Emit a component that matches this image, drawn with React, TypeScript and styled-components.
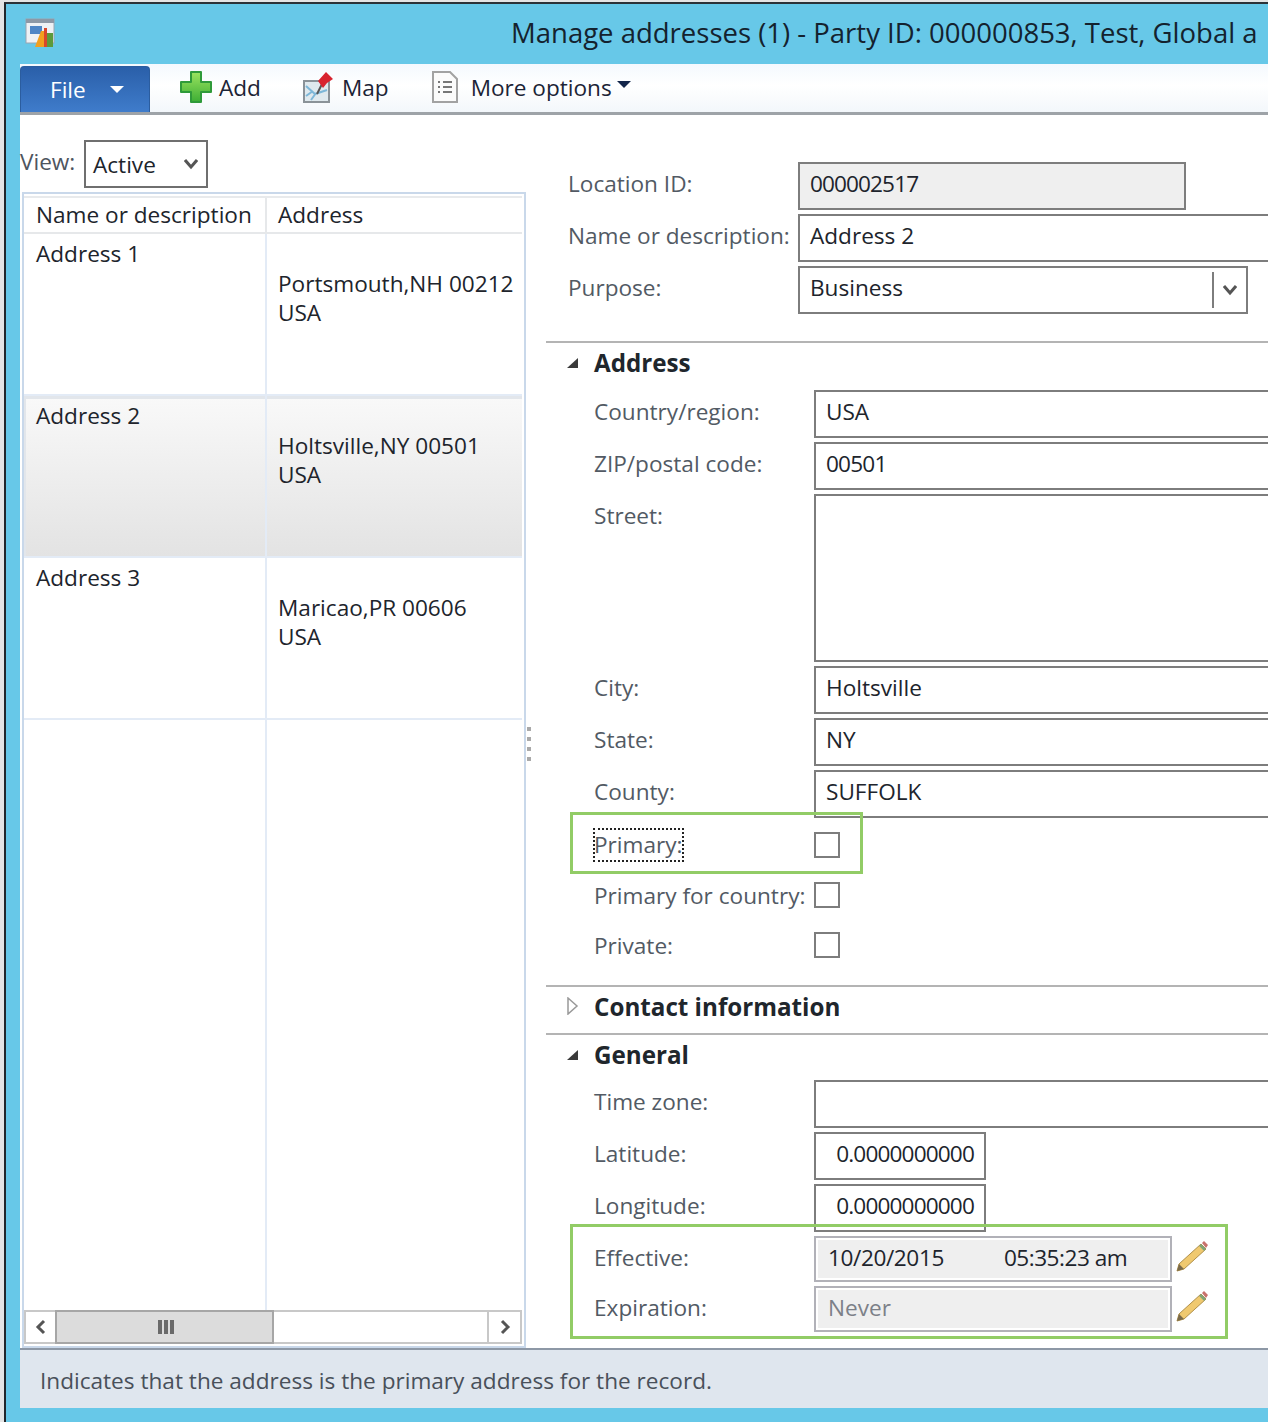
import React from 'react';
import styled, { createGlobalStyle } from 'styled-components';

const Global = createGlobalStyle`
    html, body {
        margin: 0;
        padding: 0;
        background: #e4e4e4;
    }
    body {
        font-family: "Open Sans", "Liberation Sans", sans-serif;
        font-size: 22.6px;
        color: #20242c;
        overflow: hidden;
    }
    * { box-sizing: border-box; }
`;

const Page = styled.div`
    width: 1268px;
    height: 1422px;
    padding: 2px 0 0 4px;
    overflow: hidden;
`;

const Window = styled.div`
    position: relative;
    height: 1420px;
    border-top: 2px solid #2c3238;
    border-left: 2px solid #22262a;
    background: #67c8e8;
    display: flex;
    flex-direction: column;
    overflow: hidden;
`;

const TitleBar = styled.div`
    height: 60px;
    flex: none;
    display: flex;
    align-items: center;
    padding-left: 19px;
    white-space: nowrap;
`;

const Title = styled.div`
    margin-left: 454px;
    padding-bottom: 3px;
    font-size: 27.5px;
    color: #14222e;
`;

const Client = styled.div`
    margin-left: 14px;
    flex: 1;
    display: flex;
    flex-direction: column;
    background: #fff;
    min-height: 0;
`;

const Toolbar = styled.div`
    height: 51px;
    flex: none;
    display: flex;
    background: linear-gradient(#f4f9fe, #fff 45%, #f3f7fb);
    border-bottom: 3px solid #9ea3a8;
`;

const FileButton = styled.div`
    width: 130px;
    height: 46px;
    margin-top: 2px;
    display: flex;
    align-items: center;
    padding-left: 29px;
    gap: 24px;
    color: #fff;
    background: linear-gradient(#2a5fa9, #3f7ccb);
    border: 1px solid #2b5d9f;
    border-bottom: none;
    border-radius: 4px 4px 0 0;
`;

const DownTriangle = styled.span<{ $size: number; $color: string }>`
    width: 0;
    height: 0;
    border-left: ${p => p.$size}px solid transparent;
    border-right: ${p => p.$size}px solid transparent;
    border-top: ${p => p.$size}px solid ${p => p.$color};
`;

const MenuArrow = styled(DownTriangle)`
    margin: -6px 0 0 -8px;
`;

const ToolItem = styled.div<{ $left: number; $gap: number }>`
    margin-left: ${p => p.$left}px;
    display: flex;
    align-items: center;
    gap: ${p => p.$gap}px;
    color: #1c2436;
    height: 46px;
`;

const Body = styled.div`
    flex: 1;
    display: flex;
    min-height: 0;
`;

const LeftPanel = styled.div`
    width: 506px;
    flex: none;
    display: flex;
    flex-direction: column;
    padding-top: 25px;
`;

const ViewRow = styled.div`
    height: 48px;
    flex: none;
    margin-bottom: 4px;
    display: flex;
`;

const ViewLabel = styled.div`
    width: 64px;
    line-height: 44px;
    color: #4e555e;
`;

const ViewSelect = styled.div`
    width: 124px;
    border: 2px solid #6f6f6f;
    display: flex;
    align-items: center;
    justify-content: space-between;
    padding: 0 8px 0 7px;
`;

const GridFrame = styled.div`
    flex: 1;
    margin-left: 2px;
    border: 2px solid #c9d8ea;
    padding: 2px 2px 2px 0;
    display: flex;
    flex-direction: column;
    min-height: 0;
`;

const GridRow = styled.div<{ $height?: number; $selected?: boolean; $head?: boolean }>`
    flex: ${p => (p.$height ? 'none' : '1')};
    height: ${p => (p.$height ? `${p.$height}px` : 'auto')};
    display: grid;
    grid-template-columns: 243px 1fr;
    border-bottom: 2px solid ${p => (p.$head ? '#e6e8ea' : '#e3ebf6')};
    border-top: ${p => (p.$head ? '2px solid #e8eaec' : 'none')};
    background: ${p => (p.$selected ? 'linear-gradient(#f9f9f9, #e3e3e3)' : '#fff')};
    box-shadow: ${p => (p.$selected ? 'inset 2px 3px 0 #e2e6eb' : 'none')};
`;

const Filler = styled(GridRow)`
    border-bottom: none;
`;

const NameCell = styled.div<{ $head?: boolean }>`
    border-right: 2px solid ${p => (p.$head ? '#e6e8ea' : '#e3ebf6')};
    padding: ${p => (p.$head ? '2px' : '5px')} 0 0 12px;
    line-height: 29px;
    white-space: nowrap;
`;

const AddressCell = styled.div<{ $head?: boolean }>`
    padding: ${p => (p.$head ? '2px' : '35px')} 0 0 11px;
    line-height: 29px;
    white-space: nowrap;
`;

const ScrollBar = styled.div`
    height: 34px;
    flex: none;
    border: 2px solid #c8c8c8;
    display: flex;
`;

const ScrollButton = styled.div<{ $width: number }>`
    width: ${p => p.$width}px;
    flex: none;
    display: flex;
    align-items: center;
    justify-content: center;
`;

const ScrollThumb = styled.div`
    width: 219px;
    flex: none;
    background: #dcdcdc;
    border: 2px solid #a6a6a6;
    margin: -2px 0;
    padding-left: 3px;
    display: flex;
    align-items: center;
    justify-content: center;
    gap: 2px;
`;

const ThumbBar = styled.span`
    width: 4px;
    height: 14px;
    background: #6a6a6a;
`;

const ScrollTrack = styled.div`
    flex: 1;
    border-right: 2px solid #c8c8c8;
`;

const Splitter = styled.div`
    width: 20px;
    flex: none;
    padding: 612px 0 0 1px;
    display: flex;
    flex-direction: column;
    gap: 6px;
`;

const SplitterDot = styled.span`
    width: 4px;
    height: 4px;
    background: #a9a9a9;
`;

const RightPanel = styled.div`
    flex: 1;
    min-width: 0;
    overflow: hidden;
    padding-top: 47px;
`;

const Rows = styled.div<{ $inset?: number }>`
    display: flex;
    flex-direction: column;
    gap: 4px;
    padding-left: ${p => p.$inset ?? 22}px;
`;

const Row = styled.div<{ $height?: number }>`
    display: flex;
    height: ${p => p.$height ?? 48}px;
`;

const Label = styled.div<{ $width: number }>`
    width: ${p => p.$width}px;
    flex: none;
    line-height: 44px;
    color: #525a64;
    white-space: nowrap;
`;

const Field = styled.div<{ $width: number; $right?: boolean; $readonly?: boolean }>`
    width: ${p => p.$width}px;
    flex: none;
    border: 2px solid #7d7d7d;
    background: ${p => (p.$readonly ? '#efefef' : '#fff')};
    line-height: 40px;
    padding: ${p => (p.$right ? '0 10px 0 0' : '0 0 0 10px')};
    text-align: ${p => (p.$right ? 'right' : 'left')};
    white-space: nowrap;
`;

const Digits = styled.span<{ $track: number }>`
    letter-spacing: ${p => p.$track}px;
`;

const ComboField = styled(Field)`
    display: flex;
    padding-right: 0;
`;

const ComboText = styled.div`
    flex: 1;
`;

const ComboButton = styled.div`
    width: 34px;
    flex: none;
    margin: 4px 0;
    border-left: 2px solid #7d7d7d;
    display: flex;
    align-items: center;
    justify-content: center;
`;

const DateField = styled.div<{ $muted?: boolean }>`
    width: 358px;
    flex: none;
    border: 2px solid #b1b1b8;
    outline: 2px solid #fff;
    outline-offset: -4px;
    background: #efefef;
    padding-left: 12px;
    display: flex;
    gap: 60px;
    line-height: 40px;
    color: ${p => (p.$muted ? '#7c8088' : 'inherit')};
`;

const PencilSlot = styled.div`
    margin-left: 3px;
    padding-top: 3px;
`;

const CheckGroup = styled(Rows)`
    gap: 24px;
    margin-top: 14px;
    padding-left: 48px;
`;

const CheckRow = styled.div`
    display: flex;
    align-items: center;
    height: 26px;
`;

const CheckBox = styled.div`
    width: 26px;
    height: 26px;
    border: 2px solid #7d7d7d;
    background: #fff;
`;

const FocusText = styled.span`
    outline: 2px dotted #222;
    outline-offset: -1px;
    line-height: 32px;
    display: inline-block;
`;

const CheckLabel = styled.div`
    width: 220px;
    flex: none;
    color: #525a64;
    white-space: nowrap;
`;

const Divider = styled.div<{ $top: number }>`
    margin-top: ${p => p.$top}px;
    height: 2px;
    background: #b4b4b4;
`;

const SectionHead = styled.div<{ $after: number }>`
    height: 38px;
    margin-bottom: ${p => p.$after}px;
    display: flex;
    align-items: center;
    padding-left: 20px;
    gap: 15px;
    font-weight: 700;
    font-size: 24.2px;
    color: #20262c;
    white-space: nowrap;
`;

const Highlight = styled.div<{ $x: number; $y: number; $w: number; $h: number }>`
    position: absolute;
    left: ${p => p.$x}px;
    top: ${p => p.$y}px;
    width: ${p => p.$w}px;
    height: ${p => p.$h}px;
    border: 3px solid #92cc66;
    pointer-events: none;
`;

const StatusBar = styled.div`
    height: 60px;
    flex: none;
    border-top: 2px solid #8d98a6;
    background: #dfe6ee;
    padding-left: 20px;
    line-height: 62px;
    color: #49505a;
`;

const BottomEdge = styled.div`
    height: 14px;
    flex: none;
`;

const AppIcon = () => (
    <svg width="32" height="34" viewBox="0 0 32 34">
        <rect x="1" y="2" width="28" height="24" fill="#eef1f5" stroke="#9aa4b0" />
        <rect x="1" y="2" width="28" height="4" fill="#8d98a6" />
        <rect x="5" y="9" width="12" height="8" fill="#4f86c6" />
        <path d="M10 30 L16 14 L19 14 L19 30 Z" fill="#f2a01e" />
        <path d="M19 30 V11 H22 V30 Z" fill="#d9472b" />
        <path d="M22 30 V16 H28 V30 Z" fill="#5d9a3c" />
    </svg>
);

const PlusIcon = () => (
    <svg width="32" height="32" viewBox="0 0 32 32">
        <defs>
            <linearGradient id="plusFill" x1="0" y1="0" x2="0" y2="1">
                <stop offset="0" stopColor="#9be35f" />
                <stop offset="1" stopColor="#3dae35" />
            </linearGradient>
        </defs>
        <path d="M11 1 H21 V11 H31 V21 H21 V31 H11 V21 H1 V11 H11 Z" fill="url(#plusFill)" stroke="#2f9a3a" strokeWidth="2" strokeLinejoin="round" />
    </svg>
);

const MapIcon = () => (
    <svg width="30" height="32" viewBox="0 0 30 32">
        <rect x="1" y="10" width="25" height="21" fill="#dfe9ee" stroke="#8a9298" strokeWidth="2" />
        <path d="M3 15 L12 23 L24 19 M8 29 L13 22 M3 25 L10 20" fill="none" stroke="#7db7d8" strokeWidth="2" />
        <path d="M14 23 L19 13" stroke="#555" strokeWidth="2" />
        <path d="M15 10 L23 1 L30 8 L24 12 L20 17 Z" fill="#d8232f" />
    </svg>
);

const DocIcon = () => (
    <svg width="26" height="32" viewBox="0 0 26 32">
        <path d="M1 1 H18 L25 8 V31 H1 Z" fill="#fbfbfb" stroke="#a2a2a2" strokeWidth="2" />
        <path d="M6 11 H8 M11 11 H20 M6 16 H8 M11 16 H20 M6 21 H8 M11 21 H20" stroke="#777" strokeWidth="2" />
    </svg>
);

const Pencil = () => (
    <svg width="34" height="34" viewBox="0 0 34 34">
        <path d="M2 32 L4 25 L26 5 L31 10 L9 30 Z" fill="#f0c96f" stroke="#b0904a" strokeWidth="1" strokeLinejoin="round" />
        <path d="M2 32 L4 25 L9 30 Z" fill="#7a6a4a" />
        <path d="M25 6 L30 11" stroke="#7fa577" strokeWidth="2.5" />
        <path d="M27 4 L29 2 L33 6 L31 9 Z" fill="#c9726c" />
    </svg>
);

const Chevron = ({ points }: { points: string }) => (
    <svg width="14" height="16" viewBox="0 0 14 16">
        <polyline points={points} fill="none" stroke="#555" strokeWidth="3" />
    </svg>
);

const Triangle = ({ open }: { open: boolean }) => (
    <svg width="13" height="18" viewBox="0 0 13 18">
        {open
            ? <path d="M1 15 L12 15 L12 5 Z" fill="#3a3a3a" />
            : <path d="M2 1 L11 9 L2 17 Z" fill="#fff" stroke="#999" strokeWidth="1.5" />}
    </svg>
);

type Address = {
    name: string;
    city: string;
    selected?: boolean;
};

const addresses: Address[] = [
    { name: 'Address 1', city: 'Portsmouth,NH 00212' },
    { name: 'Address 2', city: 'Holtsville,NY 00501', selected: true },
    { name: 'Address 3', city: 'Maricao,PR 00606' },
];

const App = () => (
    <Page>
        <Global />
        <Window>
            <TitleBar>
                <AppIcon />
                <Title>Manage addresses (1) - Party ID: 000000853, Test, Global a</Title>
            </TitleBar>
            <Client>
                <Toolbar>
                    <FileButton>File <DownTriangle $size={7} $color="#fff" /></FileButton>
                    <ToolItem $left={30} $gap={7}><PlusIcon />Add</ToolItem>
                    <ToolItem $left={42} $gap={9}><MapIcon />Map</ToolItem>
                    <ToolItem $left={43} $gap={13}>
                        <DocIcon />More options
                        <MenuArrow $size={7} $color="#14264a" />
                    </ToolItem>
                </Toolbar>
                <Body>
                    <LeftPanel>
                        <ViewRow>
                            <ViewLabel>View:</ViewLabel>
                            <ViewSelect>Active <Chevron points="1,4 7,11 13,4" /></ViewSelect>
                        </ViewRow>
                        <GridFrame>
                            <GridRow $height={38} $head>
                                <NameCell $head>Name or description</NameCell>
                                <AddressCell $head>Address</AddressCell>
                            </GridRow>
                            {addresses.map(a => (
                                <GridRow key={a.name} $height={162} $selected={a.selected}>
                                    <NameCell>{a.name}</NameCell>
                                    <AddressCell>{a.city}<br />USA</AddressCell>
                                </GridRow>
                            ))}
                            <Filler>
                                <NameCell />
                                <AddressCell />
                            </Filler>
                            <ScrollBar>
                                <ScrollButton $width={29}><Chevron points="10,2 4,8 10,14" /></ScrollButton>
                                <ScrollThumb><ThumbBar /><ThumbBar /><ThumbBar /></ScrollThumb>
                                <ScrollTrack />
                                <ScrollButton $width={31}><Chevron points="4,2 10,8 4,14" /></ScrollButton>
                            </ScrollBar>
                        </GridFrame>
                    </LeftPanel>
                    <Splitter>
                        <SplitterDot /><SplitterDot /><SplitterDot /><SplitterDot />
                    </Splitter>
                    <RightPanel>
                        <Rows>
                            <Row>
                                <Label $width={230}>Location ID:</Label>
                                <Field $width={388} $readonly><Digits $track={-0.9}>000002517</Digits></Field>
                            </Row>
                            <Row>
                                <Label $width={230}>Name or description:</Label>
                                <Field $width={600}>Address 2</Field>
                            </Row>
                            <Row>
                                <Label $width={230}>Purpose:</Label>
                                <ComboField $width={450}>
                                    <ComboText>Business</ComboText>
                                    <ComboButton><Chevron points="1,4 7,11 13,4" /></ComboButton>
                                </ComboField>
                            </Row>
                        </Rows>
                        <Divider $top={27} />
                        <SectionHead $after={9}><Triangle open />Address</SectionHead>
                        <Rows $inset={48}>
                            <Row><Label $width={220}>Country/region:</Label><Field $width={600}>USA</Field></Row>
                            <Row><Label $width={220}>ZIP/postal code:</Label><Field $width={600}><Digits $track={-0.8}>00501</Digits></Field></Row>
                            <Row $height={168}><Label $width={220}>Street:</Label><Field $width={600} /></Row>
                            <Row><Label $width={220}>City:</Label><Field $width={600}>Holtsville</Field></Row>
                            <Row><Label $width={220}>State:</Label><Field $width={600}>NY</Field></Row>
                            <Row><Label $width={220}>County:</Label><Field $width={600}>SUFFOLK</Field></Row>
                        </Rows>
                        <CheckGroup>
                            <CheckRow><CheckLabel><FocusText>Primary:</FocusText></CheckLabel><CheckBox /></CheckRow>
                            <CheckRow><CheckLabel>Primary for country:</CheckLabel><CheckBox /></CheckRow>
                            <CheckRow><CheckLabel>Private:</CheckLabel><CheckBox /></CheckRow>
                        </CheckGroup>
                        <Divider $top={27} />
                        <SectionHead $after={8}><Triangle open={false} />Contact information</SectionHead>
                        <Divider $top={0} />
                        <SectionHead $after={7}><Triangle open />General</SectionHead>
                        <Rows $inset={48}>
                            <Row><Label $width={220}>Time zone:</Label><Field $width={600} /></Row>
                            <Row><Label $width={220}>Latitude:</Label><Field $width={172} $right><Digits $track={-0.85}>0.0000000000</Digits></Field></Row>
                            <Row><Label $width={220}>Longitude:</Label><Field $width={172} $right><Digits $track={-0.85}>0.0000000000</Digits></Field></Row>
                            <Row $height={46}>
                                <Label $width={220}>Effective:</Label>
                                <DateField>
                                    <Digits $track={-0.4}>10/20/2015</Digits>
                                    <Digits $track={-0.5}>05:35:23 am</Digits>
                                </DateField>
                                <PencilSlot><Pencil /></PencilSlot>
                            </Row>
                            <Row $height={46}>
                                <Label $width={220}>Expiration:</Label>
                                <DateField $muted>Never</DateField>
                                <PencilSlot><Pencil /></PencilSlot>
                            </Row>
                        </Rows>
                    </RightPanel>
                </Body>
                <StatusBar>Indicates that the address is the primary address for the record.</StatusBar>
            </Client>
            <BottomEdge />
            <Highlight $x={564} $y={808} $w={293} $h={62} />
            <Highlight $x={564} $y={1220} $w={658} $h={115} />
        </Window>
    </Page>
);

export default App;
